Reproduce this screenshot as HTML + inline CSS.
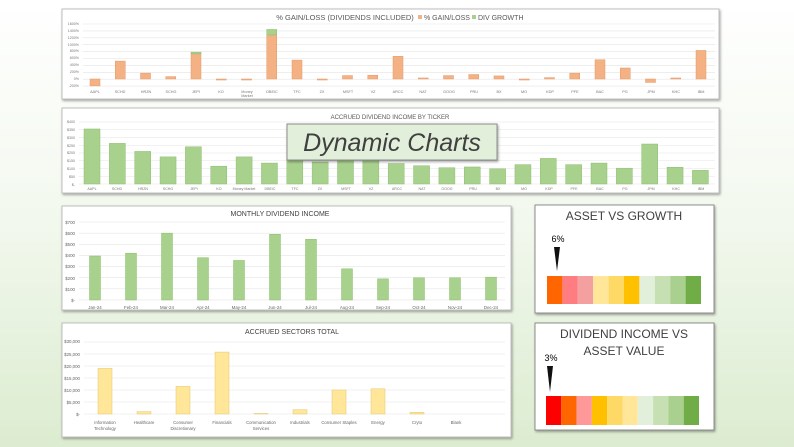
<!DOCTYPE html>
<html><head><meta charset="utf-8"><style>
html,body{margin:0;padding:0;width:794px;height:447px;overflow:hidden}
svg{display:block;font-family:"Liberation Sans",sans-serif}
</style></head><body>
<svg id="s" width="794" height="447" viewBox="0 0 794 447" xmlns="http://www.w3.org/2000/svg">
<defs>
<linearGradient id="bg" x1="0" y1="0" x2="0" y2="1"><stop offset="0" stop-color="#ffffff"/><stop offset="0.45" stop-color="#f4f9f0"/><stop offset="1" stop-color="#dcecd0"/></linearGradient>
<filter id="sh" x="-5%" y="-5%" width="110%" height="115%"><feDropShadow dx="1" dy="1.5" stdDeviation="1.2" flood-color="#000" flood-opacity="0.35"/></filter>
</defs>
<rect width="794" height="447" fill="url(#bg)"/>
<!-- panels -->
<rect x="62" y="9" width="657" height="90" fill="#fff" stroke="#bfbfbf" filter="url(#sh)"/>
<rect x="62" y="108" width="657" height="85" fill="#fff" stroke="#bfbfbf" filter="url(#sh)"/>
<rect x="62" y="206" width="449" height="104" fill="#fff" stroke="#bfbfbf" filter="url(#sh)"/>
<rect x="62" y="323" width="449" height="114" fill="#fff" stroke="#bfbfbf" filter="url(#sh)"/>
<rect x="535" y="205" width="179" height="108" fill="#fff" stroke="#8c8c8c" filter="url(#sh)"/>
<rect x="535" y="323" width="179" height="107" fill="#fff" stroke="#8c8c8c" filter="url(#sh)"/>
<g id="grid" stroke="#e4e4e4" stroke-width="0.6"></g>
<g id="bars"></g>
<!-- panel1 text -->
<g font-size="7" fill="#595959"><text x="345" y="20" text-anchor="middle" font-size="7.5">% GAIN/LOSS (DIVIDENDS INCLUDED)</text>
<rect x="418" y="15" width="4" height="4" fill="#f4b183"/><text x="424" y="20">% GAIN/LOSS</text>
<rect x="472" y="15" width="4" height="4" fill="#a9d18e"/><text x="478" y="20">DIV GROWTH</text></g>
<g font-size="3.6" fill="#777" text-anchor="end">
<text x="79" y="25">1600%</text><text x="79" y="32">1400%</text><text x="79" y="39">1200%</text><text x="79" y="46">1000%</text><text x="79" y="52">800%</text><text x="79" y="59">600%</text><text x="79" y="66">400%</text><text x="79" y="73">200%</text><text x="79" y="80">0%</text><text x="79" y="87">-200%</text></g>
<g font-size="3.8" fill="#777" text-anchor="middle">
<text x="95" y="93">AAPL</text><text x="120" y="93">SCHD</text><text x="146" y="93">HRZN</text><text x="171" y="93">SCHG</text><text x="196" y="93">JEPI</text><text x="221" y="93">KO</text><text x="247" y="93">Money</text><text x="247" y="97">Market</text><text x="272" y="93">DBEIC</text><text x="297" y="93">TFC</text><text x="322" y="93">ZX</text><text x="348" y="93">MSFT</text><text x="373" y="93">VZ</text><text x="398" y="93">ARCC</text><text x="423" y="93">NAT</text><text x="449" y="93">GOOG</text><text x="474" y="93">PRU</text><text x="499" y="93">BX</text><text x="524" y="93">MO</text><text x="550" y="93">KDP</text><text x="575" y="93">PFE</text><text x="600" y="93">BAC</text><text x="625" y="93">PG</text><text x="651" y="93">JPM</text><text x="676" y="93">KHC</text><text x="701" y="93">IBM</text></g>
<!-- panel2 text -->
<text x="390" y="119" font-size="6" fill="#595959" text-anchor="middle">ACCRUED DIVIDEND INCOME BY TICKER</text>
<g font-size="3.6" fill="#777" text-anchor="end"><text x="75" y="123">$400</text><text x="75" y="131">$350</text><text x="75" y="139">$300</text><text x="75" y="147">$250</text><text x="75" y="154">$200</text><text x="75" y="162">$150</text><text x="75" y="170">$100</text><text x="75" y="178">$50</text><text x="75" y="186">$-</text></g>
<g font-size="3.6" fill="#777" text-anchor="middle">
<text x="92" y="190">AAPL</text><text x="117" y="190">SCHD</text><text x="143" y="190">HRZN</text><text x="168" y="190">SCHG</text><text x="194" y="190">JEPI</text><text x="219" y="190">KO</text><text x="244" y="190">Money Market</text><text x="270" y="190">DBEIC</text><text x="295" y="190">TFC</text><text x="320" y="190">ZX</text><text x="346" y="190">MSFT</text><text x="371" y="190">VZ</text><text x="397" y="190">ARCC</text><text x="422" y="190">NAT</text><text x="447" y="190">GOOG</text><text x="473" y="190">PRU</text><text x="498" y="190">BX</text><text x="524" y="190">MO</text><text x="549" y="190">KDP</text><text x="574" y="190">PFE</text><text x="600" y="190">BAC</text><text x="625" y="190">PG</text><text x="651" y="190">JPM</text><text x="676" y="190">KHC</text><text x="701" y="190">IBM</text></g>
<!-- panel3 text -->
<text x="280" y="216" font-size="7" fill="#404040" text-anchor="middle">MONTHLY DIVIDEND INCOME</text>
<g font-size="4.4" fill="#666" text-anchor="end"><text x="75" y="224">$700</text><text x="75" y="235">$600</text><text x="75" y="246">$500</text><text x="75" y="257">$400</text><text x="75" y="268">$300</text><text x="75" y="280">$200</text><text x="75" y="291">$100</text><text x="75" y="302">$-</text></g>
<g font-size="4.4" fill="#666" text-anchor="middle"><text x="95" y="309">Jan-24</text><text x="131" y="309">Feb-24</text><text x="167" y="309">Mar-24</text><text x="203" y="309">Apr-24</text><text x="239" y="309">May-24</text><text x="275" y="309">Jun-24</text><text x="311" y="309">Jul-24</text><text x="347" y="309">Aug-24</text><text x="383" y="309">Sep-24</text><text x="419" y="309">Oct-24</text><text x="455" y="309">Nov-24</text><text x="491" y="309">Dec-24</text></g>
<!-- panel4 text -->
<text x="292" y="334" font-size="7" fill="#404040" text-anchor="middle">ACCRUED SECTORS TOTAL</text>
<g font-size="4.4" fill="#666" text-anchor="end"><text x="80" y="343">$30,000</text><text x="80" y="356">$25,000</text><text x="80" y="368">$20,000</text><text x="80" y="380">$15,000</text><text x="80" y="392">$10,000</text><text x="80" y="404">$5,000</text><text x="80" y="416">$-</text></g>
<g font-size="4.3" fill="#666" text-anchor="middle">
<text x="105" y="424">Information</text><text x="105" y="430">Technology</text><text x="144" y="424">Healthcare</text><text x="183" y="424">Consumer</text><text x="183" y="430">Discretionary</text><text x="222" y="424">Financials</text><text x="261" y="424">Communication</text><text x="261" y="430">Services</text><text x="300" y="424">Industrials</text><text x="339" y="424">Consumer Staples</text><text x="378" y="424">Energy</text><text x="417" y="424">Cryto</text><text x="456" y="424">Blank</text></g>
<!-- gauges -->
<text x="624" y="220" font-size="12" fill="#404040" text-anchor="middle">ASSET VS GROWTH</text>
<text x="558" y="242" font-size="9" fill="#000" text-anchor="middle">6%</text>
<polygon points="554,247 560,247 557,271" fill="#111"/>
<text x="624" y="338" font-size="12" fill="#404040" text-anchor="middle">DIVIDEND INCOME VS</text>
<text x="624" y="355" font-size="12" fill="#404040" text-anchor="middle">ASSET VALUE</text>
<text x="551" y="361" font-size="9" fill="#000" text-anchor="middle">3%</text>
<polygon points="547,366 553,366 550,392" fill="#111"/>
<g id="gz"></g>
<!-- dynamic charts -->
<rect x="287" y="124" width="210" height="36" fill="#e2efda" stroke="#8c8c8c" filter="url(#sh)"/>
<text x="392" y="151" font-size="25" font-style="italic" fill="#404040" text-anchor="middle">Dynamic Charts</text>
</svg>
<script>
var NS="http://www.w3.org/2000/svg",B=document.getElementById('bars'),G=document.getElementById('grid'),Z=document.getElementById('gz');
function r(p,x,y,w,h,f,s){var e=document.createElementNS(NS,'rect');e.setAttribute('x',x);e.setAttribute('y',y);e.setAttribute('width',w);e.setAttribute('height',Math.max(h,0.3));e.setAttribute('fill',f);if(s){e.setAttribute('stroke',s);e.setAttribute('stroke-width','0.5');}p.appendChild(e);}
function l(x1,y,x2){var e=document.createElementNS(NS,'line');e.setAttribute('x1',x1);e.setAttribute('x2',x2);e.setAttribute('y1',y);e.setAttribute('y2',y);G.appendChild(e);}
// panel1
for(var i=0;i<10;i++)l(83,24+i*6.9,715);
var g=[-20,52,17,7,73,-3,-3,128,55,-3,10,11,66,3,10,13,9,-3,4,17,56,32,-10,3,83],gg=[0,0,0,0,5,0,0,16,0,0,0,0,0,0,0,0,0,0,0,0,0,0,0,0,0];
var k=0.344,z=79;
g.forEach(function(v,i){var x=95+25.25*i-5;if(v>=0){r(B,x,z-v*k,10,v*k,'#f4b183','#e59a68');}else{r(B,x,z,10,-v*k,'#f4b183','#e59a68');}
if(gg[i])r(B,x,z-(v+gg[i])*k,10,gg[i]*k,'#a9d18e','#8cbf6c');});
// panel2
for(i=0;i<9;i++)l(79,122+i*7.75,715);
var d=[355,262,210,175,240,115,175,135,175,142,155,175,132,118,105,110,98,125,165,125,135,102,258,108,88];
d.forEach(function(v,i){var h=v*0.155;r(B,92+25.35*i-8,184-h,16,h,'#a9d18e','#8cbf6c');});
// panel3
for(i=0;i<8;i++)l(79,222+i*11.14,505);
var m=[395,420,600,380,355,590,545,280,190,200,200,205];
m.forEach(function(v,i){var h=v*0.1114;r(B,95+36*i-5.5,300-h,11,h,'#a9d18e','#8cbf6c');});
// panel4
for(i=0;i<7;i++)l(84,342+i*12,505);
var s=[19000,1000,11500,25800,200,1800,10000,10500,700,0];
s.forEach(function(v,i){if(!v)return;var h=v*0.0024;r(B,105+39*i-7,414-h,14,h,'#ffe699','#e6c86a');});
// gauges
var c1=['#ff6600','#ff7c80','#f4a0a0','#ffe699','#ffd966','#ffc000','#e2efda','#c6e0b4','#a9d08e','#70ad47'];
c1.forEach(function(c,i){r(Z,547+15.4*i,276,15.4,28,c);});
var c2=['#ff0000','#ff6600','#ff9999','#ffc000','#ffd966','#ffe699','#e2efda','#c6e0b4','#a9d08e','#70ad47'];
c2.forEach(function(c,i){r(Z,546+15.3*i,396,15.3,29,c);});
</script>
</body></html>
